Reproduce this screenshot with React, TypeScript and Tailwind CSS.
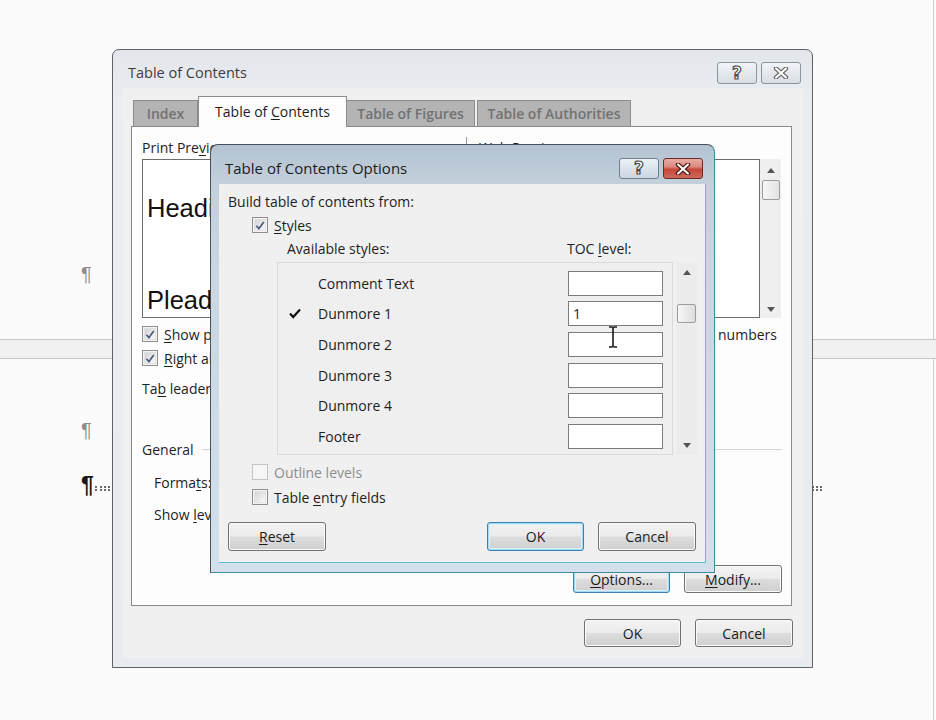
import React from 'react';

const F = "font-['Open_Sans','Noto_Sans',sans-serif]";

function Btn({ children, focus = false, className = '' }: { children?: React.ReactNode; focus?: boolean; className?: string }) {
  const b = focus
    ? 'border-[#3c7fb1] shadow-[inset_0_0_0_1px_#9fdcf2,inset_0_0_0_2px_#d8f1fb] bg-[linear-gradient(180deg,#f2f2f2_0%,#ebebeb_48%,#dddddd_52%,#cfcfcf_100%)]'
    : 'border-[#707070] shadow-[inset_0_0_0_1px_#fbfbfb] bg-[linear-gradient(180deg,#f3f3f3_0%,#ebebeb_48%,#dddddd_52%,#cfcfcf_100%)]';
  return (
    <div className={`flex items-center justify-center rounded-[3px] border text-[14px] text-[#1b1b1b] ${b} ${className}`}>
      {children}
    </div>
  );
}

function Check({ checked = false, disabled = false }: { checked?: boolean; disabled?: boolean }) {
  if (disabled) {
    return <div className="w-[16px] h-[16px] shrink-0 border border-[#c4c4c4] bg-[#f5f5f5]" />;
  }
  return (
    <div className="w-[16px] h-[16px] shrink-0 border border-[#8e8f8f] bg-[#f4f4f4] p-[1px]">
      <div className="w-full h-full border border-[#e2e2e2] bg-[linear-gradient(135deg,#d4d4d4,#f8f8f8)] flex items-center justify-center">
        {checked && (
          <svg width="11" height="11" viewBox="0 0 11 11">
            <path d="M1.5 5.8 L4.3 9 L9.6 1.6" fill="none" stroke="#4a5c80" strokeWidth="1.9" />
          </svg>
        )}
      </div>
    </div>
  );
}

function Up() {
  return (
    <svg width="8" height="5" viewBox="0 0 8 5">
      <path d="M0 5 L4 0 L8 5 Z" fill="#555" />
    </svg>
  );
}
function Down() {
  return (
    <svg width="8" height="5" viewBox="0 0 8 5">
      <path d="M0 0 L4 5 L8 0 Z" fill="#555" />
    </svg>
  );
}

function HelpBtn({ active = false }: { active?: boolean }) {
  return (
    <div
      className={
        active
          ? 'w-[40px] h-[21px] rounded-[3px] border border-[#6f7f90] bg-[linear-gradient(180deg,#eef2f6_0%,#dbe3eb_50%,#cbd6e1_100%)] flex items-center justify-center'
          : 'w-[40px] h-[22px] rounded-[3px] border border-[#8a939e] bg-[linear-gradient(180deg,#f3f5f8_0%,#e4e8ed_50%,#d9dee4_100%)] flex items-center justify-center'
      }
    >
      <span className="font-['DejaVu_Sans',sans-serif] font-bold text-[17px] leading-none text-white [-webkit-text-stroke:1.2px_#4d4d4d]">?</span>
    </div>
  );
}

function XGlyph({ dark }: { dark: string }) {
  return (
    <svg width="16" height="12" viewBox="0 0 16 12">
      <path d="M3 1.5 L13 10.5 M13 1.5 L3 10.5" stroke={dark} strokeWidth="4.4" strokeLinecap="round" fill="none" />
      <path d="M3 1.5 L13 10.5 M13 1.5 L3 10.5" stroke="#ffffff" strokeWidth="2" strokeLinecap="round" fill="none" />
    </svg>
  );
}

const styles = ['Comment Text', 'Dunmore 1', 'Dunmore 2', 'Dunmore 3', 'Dunmore 4', 'Footer'];

export default function App() {
  return (
    <div className={`relative w-[936px] h-[720px] overflow-hidden bg-[#fbfbfb] text-[#1e1e1e] ${F}`}>
      {/* Document background */}
      <div className="flex flex-col h-full w-[934px]">
        <div className="h-[339px] border-r border-[#cfcfcf] pl-[81px] pt-[263px]">
          <span className="font-['Liberation_Sans',sans-serif] text-[20px] leading-[22px] text-[#8d8d8d]">¶</span>
        </div>
        <div className="h-[20px] w-[936px] shrink-0 border-y border-[#c6c6c6] bg-[#f1f1f1]" />
        <div className="flex-1 border-r border-[#cfcfcf] pl-[81px] pt-[60px] flex flex-col">
          <span className="font-['Liberation_Sans',sans-serif] text-[20px] leading-[22px] text-[#8d8d8d]">¶</span>
          <div className="mt-[31px] flex items-center">
            <span className="font-['Liberation_Sans',sans-serif] font-bold text-[23px] leading-[26px] text-[#1a1a1a]">¶</span>
            <div className="ml-[1px] mt-[6px] w-[727px] h-[5px] border-y-2 border-dotted border-[#6a6a6a]" />
          </div>
        </div>
      </div>

      {/* Main dialog: Table of Contents */}
      <div className="absolute left-[112px] top-[49px] w-[701px] h-[619px] rounded-t-[7px] border border-[#5e6166] bg-[linear-gradient(180deg,#e3e7ec_0%,#e9ecf0_8%,#e8ebef_100%)] flex flex-col">
        <div className="h-[38px] flex items-center pt-[8px] pl-[15px] pr-[11px]">
          <span className="text-[14.5px] text-[#3d3d3d]">Table of Contents</span>
          <div className="ml-auto flex gap-[4px]">
            <HelpBtn />
            <div className="w-[40px] h-[22px] rounded-[3px] border border-[#8a939e] bg-[linear-gradient(180deg,#f3f5f8_0%,#e4e8ed_50%,#d9dee4_100%)] flex items-center justify-center">
              <XGlyph dark="#6a6a6a" />
            </div>
          </div>
        </div>
        <div className="mx-[9px] h-[570px] bg-[#f0f0f0] pt-[9px] px-[9px] flex flex-col">
          {/* tabs */}
          <div className="h-[29px] flex items-end pl-[2px]">
            <div className="w-[65px] h-[26px] border border-b-0 border-[#8c8c8c] bg-[#b4b4b4] flex items-center justify-center text-[14px] font-semibold text-[#727272]">Index</div>
            <div className="relative z-10 -mb-px w-[149px] h-[31px] border border-b-0 border-[#8c8c8c] bg-[#fdfdfd] flex items-center justify-center text-[14px] pb-[2px]">
              Table of&nbsp;<span className="underline underline-offset-2">C</span>ontents
            </div>
            <div className="w-[128px] h-[26px] border border-b-0 border-l-0 border-[#8c8c8c] bg-[#b4b4b4] flex items-center justify-center text-[14px] font-semibold text-[#727272]">Table of Figures</div>
            <div className="ml-[2px] w-[154px] h-[26px] border border-b-0 border-[#8c8c8c] bg-[#b4b4b4] flex items-center justify-center text-[14px] font-semibold text-[#727272]">Table of Authorities</div>
          </div>
          {/* panel */}
          <div className="w-[661px] h-[480px] border border-[#898989] bg-[#fdfdfd] pt-[10px] pl-[10px] pr-[9px] flex flex-col">
            <div className="flex">
              <div className="w-[325px] border-r border-[#9a9a9a] pr-[7px] flex flex-col">
                <div className="h-[20px] flex items-center text-[14px]">
                  Print Pre<span className="underline underline-offset-2">v</span>iew
                </div>
                <div className="mt-[2px] h-[159px] border border-[#6d6d6d] bg-white pt-[34px] pb-[3px] pl-[4px] flex flex-col justify-between font-['Liberation_Sans',sans-serif] text-[25.5px] leading-[28px] text-[#111]">
                  <div>Heading</div>
                  <div>Pleading</div>
                </div>
                <div className="mt-[8px] h-[16px] flex items-center gap-[6px] text-[14px]">
                  <Check checked />
                  <span><span className="underline underline-offset-2">S</span>how page numbers</span>
                </div>
                <div className="mt-[8px] h-[16px] flex items-center gap-[6px] text-[14px]">
                  <Check checked />
                  <span><span className="underline underline-offset-2">R</span>ight align page numbers</span>
                </div>
                <div className="mt-[12px] h-[20px] flex items-center text-[14px]">
                  Ta<span className="underline underline-offset-2">b</span>&nbsp;leader:
                </div>
              </div>
              <div className="pl-[12px] w-[314px] flex flex-col">
                <div className="h-[20px] flex items-center text-[14px]">
                  Web Preview
                </div>
                <div className="mt-[2px] h-[159px] flex">
                  <div className="flex-1 border border-[#6d6d6d] bg-white" />
                  <div className="w-[21px] bg-[#efefef] flex flex-col items-center pt-[9px] pb-[6px]">
                    <Up />
                    <div className="mt-[7px] w-[18px] h-[20px] rounded-[2px] border border-[#9c9c9c] bg-[linear-gradient(90deg,#f7f7f7,#e2e2e2)]" />
                    <div className="flex-1" />
                    <Down />
                  </div>
                </div>
                <div className="mt-[8px] h-[16px] flex items-center justify-end pr-[4px] gap-[6px] text-[14px]">
                  <Check checked />
                  <span>Use <span className="underline underline-offset-2">h</span>yperlinks instead of page numbers</span>
                </div>
              </div>
            </div>
            <div className="mt-[41px] h-[20px] flex items-center text-[14px]">
              <span>General</span>
              <div className="ml-[8px] flex-1 h-px bg-[#d5d5d5]" />
            </div>
            <div className="mt-[13px] h-[20px] pl-[12px] flex items-center text-[14px]">
              Forma<span className="underline underline-offset-2">t</span>s:
            </div>
            <div className="mt-[12px] h-[20px] pl-[12px] flex items-center text-[14px]">
              Show&nbsp;<span className="underline underline-offset-2">l</span>evels:
            </div>
            <div className="mt-[41px] flex justify-end gap-[14px]">
              <Btn focus className="w-[97px] h-[28px]">
                <span><span className="underline underline-offset-2">O</span>ptions...</span>
              </Btn>
              <Btn className="w-[98px] h-[28px]">
                <span><span className="underline underline-offset-2">M</span>odify...</span>
              </Btn>
            </div>
          </div>
          <div className="mt-[13px] pr-[1px] flex justify-end gap-[14px]">
            <Btn className="w-[97px] h-[28px]">OK</Btn>
            <Btn className="w-[98px] h-[28px]">Cancel</Btn>
          </div>
        </div>
      </div>

      {/* Options dialog */}
      <div className="absolute left-[210px] top-[144px] w-[505px] h-[429px] rounded-t-[8px] border border-[#48525c] border-r-[#3f8d9b] border-b-[#3f8d9b] bg-[linear-gradient(180deg,#b3c3d1_0%,#c3d0dc_9%,#cad7e3_30%,#d3dfea_100%)] flex flex-col">
        <div className="h-[39px] flex items-center pt-[8px] pl-[14px] pr-[11px]">
          <span className="text-[15px] text-[#1b1b1b]">Table of Contents Options</span>
          <div className="ml-auto flex gap-[4px]">
            <HelpBtn active />
            <div className="w-[40px] h-[21px] rounded-[3px] border border-[#6b2b25] bg-[linear-gradient(180deg,#e9aba2_0%,#dc8a80_40%,#c7473b_55%,#cf6a5e_100%)] flex items-center justify-center">
              <XGlyph dark="#4a1a15" />
            </div>
          </div>
        </div>
        <div className="mx-[8px] h-[379px] bg-[#f0f0f0] border-r border-b border-[#5cc1cf] pt-[7px] flex flex-col">
          <div className="pl-[9px] h-[20px] flex items-center text-[14px]">Build table of contents from:</div>
          <div className="mt-[6px] pl-[33px] h-[16px] flex items-center gap-[6px] text-[14px]">
            <Check checked />
            <span><span className="underline underline-offset-2">S</span>tyles</span>
          </div>
          <div className="mt-[5px] pl-[68px] h-[20px] flex items-center text-[14px]">
            <span className="w-[280px]">Available styles:</span>
            <span>TOC&nbsp;<span className="underline underline-offset-2">l</span>evel:</span>
          </div>
          <div className="mt-[4px] ml-[58px] flex gap-[3px]">
            <div className="w-[396px] h-[193px] border border-[#dadada] bg-[#efefef] pt-[5px]">
              {styles.map((s, i) => (
                <div key={s} className="h-[30.6px] flex items-center text-[14px]">
                  <div className="w-[40px] pl-[11px] flex items-center">
                    {i === 1 && (
                      <svg width="12" height="11" viewBox="0 0 12 11">
                        <path d="M1 5.5 L4.2 9 L11 1.5" fill="none" stroke="#111" strokeWidth="2.2" />
                      </svg>
                    )}
                  </div>
                  <div className="w-[250px]">{s}</div>
                  <div className="w-[95px] h-[25px] border border-[#7c7c7c] bg-white flex items-center pl-[4px] text-[14px]">
                    {i === 1 ? '1' : ''}
                  </div>
                </div>
              ))}
            </div>
            <div className="w-[21px] h-[193px] bg-[#ececec] flex flex-col items-center pt-[8px] pb-[7px]">
              <Up />
              <div className="mt-[29px] w-[19px] h-[19px] rounded-[2px] border border-[#9c9c9c] bg-[linear-gradient(90deg,#f7f7f7,#dcdcdc)]" />
              <div className="flex-1" />
              <Down />
            </div>
          </div>
          <div className="mt-[9px] pl-[33px] h-[16px] flex items-center gap-[6px] text-[14px] text-[#8d8d8d]">
            <Check disabled />
            <span>Outline levels</span>
          </div>
          <div className="mt-[9px] pl-[33px] h-[16px] flex items-center gap-[6px] text-[14px]">
            <Check />
            <span>Table <span className="underline underline-offset-2">e</span>ntry fields</span>
          </div>
          <div className="mt-[17px] pl-[9px] pr-[9px] flex">
            <Btn className="w-[98px] h-[29px]">
              <span><span className="underline underline-offset-2">R</span>eset</span>
            </Btn>
            <div className="flex-1" />
            <Btn focus className="w-[97px] h-[29px]">OK</Btn>
            <Btn className="ml-[14px] w-[98px] h-[29px]">Cancel</Btn>
          </div>
        </div>
      </div>

      {/* I-beam cursor */}
      <svg className="absolute left-[607px] top-[326px]" width="12" height="22" viewBox="0 0 12 22">
        <path d="M2 1 H5 Q6 1 6 3 V19 Q6 21 5 21 H2 M10 1 H7 Q6 1 6 3 M6 19 Q6 21 7 21 H10" fill="none" stroke="#1a1a1a" strokeWidth="1.6" />
      </svg>
    </div>
  );
}
